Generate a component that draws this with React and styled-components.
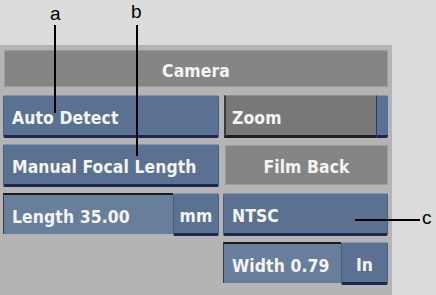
import React from "react";
import styled, { createGlobalStyle } from "styled-components";

const Global = createGlobalStyle`
  html, body {
    margin: 0;
    padding: 0;
    background: #dcdcdc;
  }
  body {
    width: 436px;
    height: 295px;
    overflow: hidden;
  }
`;

const Stage = styled.div`
  position: relative;
  width: 436px;
  height: 295px;
  padding-top: 45px;
  box-sizing: border-box;
  font-family: "DejaVu Sans Condensed", "DejaVu Sans", sans-serif;
  font-stretch: condensed;
`;

const Panel = styled.div`
  width: 392px;
  height: 250px;
  box-sizing: border-box;
  background: #b4b4b4;
  padding: 5px 4px 0 3px;
  display: grid;
  grid-template-columns: 216px 165px;
  grid-template-rows: 39px repeat(4, 43px);
  column-gap: 4px;
  row-gap: 6px;
  & > :first-child {
    margin-bottom: 2px;
  }
`;

const Header = styled.div`
  grid-column: 1 / 3;
  margin-left: 1px;
  background: #858585;
  border: 1px solid #9b9b9b;
  display: flex;
  align-items: center;
  justify-content: center;
`;

const Label = styled.span`
  color: #f4f4f4;
  font-weight: bold;
  font-size: 17.4px;
  letter-spacing: 0.1px;
  white-space: nowrap;
  padding-top: 4px;
`;

const BlueButton = styled.div`
  box-sizing: border-box;
  background: #5a7191;
  border-top: 1px solid #7f94b1;
  border-left: 1px solid #4b5e80;
  border-right: 1px solid #4b5e80;
  border-bottom: 3px solid #1f2750;
  border-radius: 2px;
  display: flex;
  align-items: center;
  justify-content: ${(p) => (p.$center ? "center" : "flex-start")};
  padding-left: ${(p) => (p.$center ? 0 : 8)}px;
`;

const ZoomButton = styled.div`
  box-sizing: border-box;
  display: flex;
  margin-left: 1px;
`;

const ZoomFace = styled.div`
  flex: 1;
  background: #787878;
  border-top: 1px solid #8e8e8e;
  border-left: 2px solid #3c3c3c;
  border-bottom: 3px solid #202020;
  display: flex;
  align-items: center;
  padding-left: 6px;
`;

const ZoomTab = styled.div`
  width: 11px;
  background: #5a7191;
  border-top: 1px solid #7f94b1;
  border-left: 1px solid #2e3a58;
  border-bottom: 3px solid #1f2750;
  border-radius: 0 2px 2px 0;
`;

const FlatTitle = styled.div`
  box-sizing: border-box;
  margin: 1px 0 2px 2px;
  background: #858585;
  border: 1px solid #9b9b9b;
  display: flex;
  align-items: center;
  justify-content: center;
`;

const FieldRow = styled.div`
  display: grid;
  grid-template-columns: ${(p) => p.$cols};
`;

const Field = styled.div`
  box-sizing: border-box;
  background: #687f9c;
  border-top: 2px solid #1c1c1c;
  border-left: 1px solid #3a3a3a;
  display: flex;
  align-items: center;
  padding-left: 8px;
  margin-bottom: 2px;
`;

const Empty = styled.div``;

const Letter = styled.span`
  position: absolute;
  font-family: "Liberation Sans", Arial, sans-serif;
  font-size: 19px;
  color: #000;
  line-height: 1;
`;

const Leader = styled.div`
  position: absolute;
  background: #000;
`;

export default function App() {
  return (
    <>
      <Global />
      <Stage>
        <Panel>
          <Header>
            <Label>Camera</Label>
          </Header>

          <BlueButton>
            <Label>Auto Detect</Label>
          </BlueButton>
          <ZoomButton>
            <ZoomFace>
              <Label>Zoom</Label>
            </ZoomFace>
            <ZoomTab />
          </ZoomButton>

          <BlueButton>
            <Label>Manual Focal Length</Label>
          </BlueButton>
          <FlatTitle>
            <Label>Film Back</Label>
          </FlatTitle>

          <FieldRow $cols="170px 46px">
            <Field>
              <Label>Length 35.00</Label>
            </Field>
            <BlueButton $center>
              <Label>mm</Label>
            </BlueButton>
          </FieldRow>
          <BlueButton>
            <Label>NTSC</Label>
          </BlueButton>

          <Empty />
          <FieldRow $cols="118px 47px">
            <Field>
              <Label>Width 0.79</Label>
            </Field>
            <BlueButton $center>
              <Label>In</Label>
            </BlueButton>
          </FieldRow>
        </Panel>

        <Letter style={{ left: 50, top: 4 }}>a</Letter>
        <Leader style={{ left: 54, top: 25, width: 2, height: 88 }} />
        <Letter style={{ left: 131, top: 2 }}>b</Letter>
        <Leader style={{ left: 136, top: 25, width: 2, height: 131 }} />
        <Letter style={{ left: 422, top: 208 }}>c</Letter>
        <Leader style={{ left: 355, top: 219, width: 65, height: 2 }} />
      </Stage>
    </>
  );
}
